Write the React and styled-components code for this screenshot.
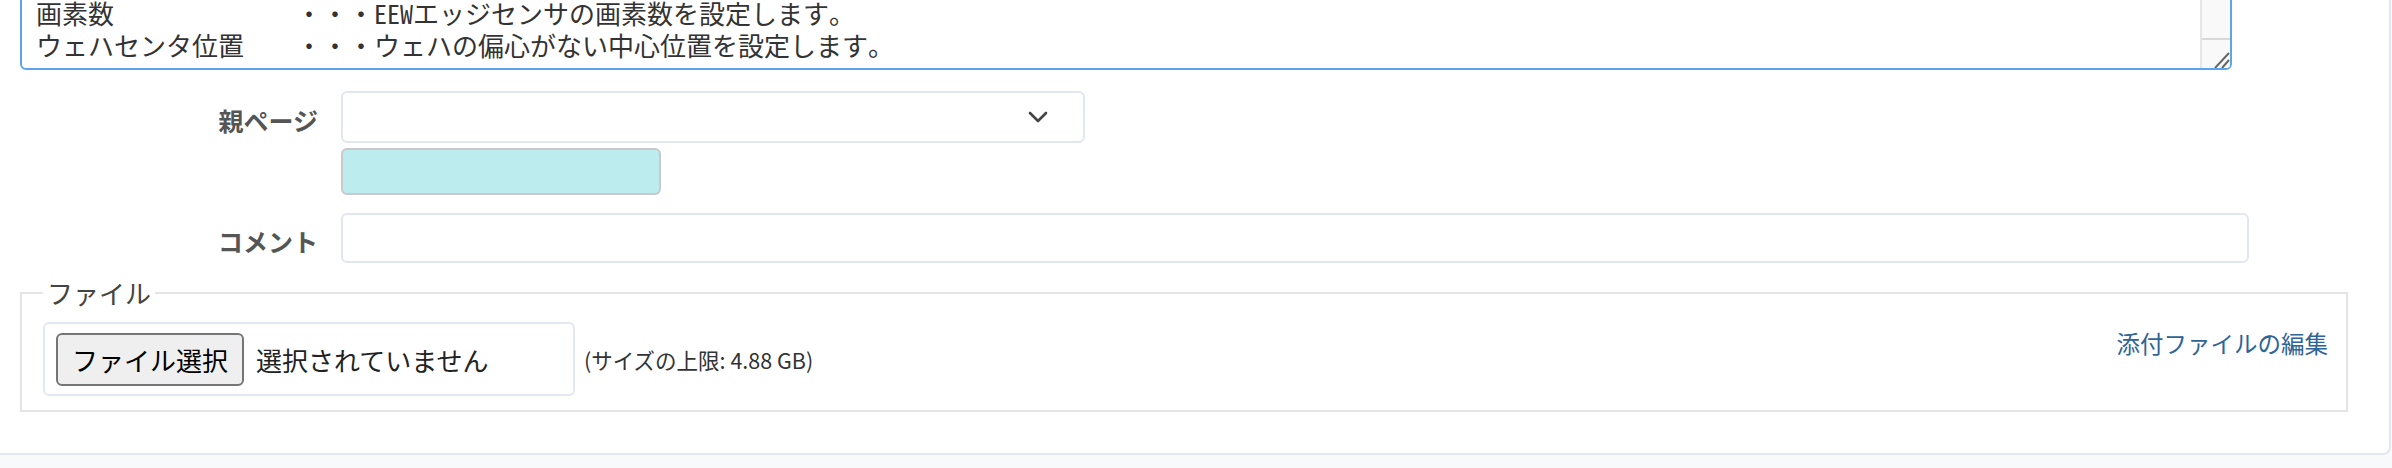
import React from "react";
import styled, { createGlobalStyle } from "styled-components";

const GlobalStyle = createGlobalStyle`
  html, body {
    margin: 0;
    padding: 0;
    background: #f8f9fb;
  }
  body {
    font-family: "Noto Sans CJK JP", "Liberation Sans", sans-serif;
    overflow: hidden;
  }
`;

export const Page = styled.div`
  width: 2391px;
  box-sizing: border-box;
  background: #fff;
  border-right: 2px solid #e3e7ee;
  border-bottom: 2px solid #e3e7ee;
  border-bottom-right-radius: 8px;
  padding: 0 0 41px 20px;
`;

// textarea with its scrollbar column; the top of it is scrolled out of view
export const EditorFrame = styled.div`
  box-sizing: border-box;
  display: flex;
  width: 2212px;
  height: 273px;
  margin-top: -203px;
  border: 2px solid #5aa5ee;
  border-radius: 6px;
  background: #fff;
  overflow: hidden;
`;

export const WikiText = styled.textarea`
  flex: 1;
  min-width: 0;
  box-sizing: border-box;
  margin: 0;
  padding: 6px 14px 7px 14px;
  border: none;
  outline: none;
  background: transparent;
  color: #333;
  font-family: "Noto Sans Mono CJK JP", "Noto Sans CJK JP", monospace;
  font-size: 26px;
  line-height: 32px;
  white-space: pre;
  overflow: hidden;
  resize: none;
`;

export const ScrollGutter = styled.div`
  width: 28px;
  display: flex;
  flex-direction: column;
  background: #f9f9f9;
  border-left: 2px solid #e6e6e6;
`;

export const ScrollTrack = styled.div`
  flex: 1;
`;

export const ScrollCorner = styled.div`
  height: 28px;
  border-top: 2px solid #d8d8d8;
  display: flex;
  align-items: flex-end;
  justify-content: flex-end;
`;

export const FormRow = styled.div`
  display: grid;
  grid-template-columns: 298px auto;
  column-gap: 23px;
  align-items: start;
  margin-top: ${(p) => p.$top}px;
`;

export const Label = styled.label`
  text-align: right;
  font-weight: bold;
  font-size: 25px;
  color: #555;
  line-height: ${(p) => p.$h}px;
  padding-top: 3px;
`;

export const Field = styled.div`
  display: flex;
  flex-direction: column;
  gap: 5px;
`;

export const Select = styled.div`
  box-sizing: border-box;
  width: 744px;
  height: 52px;
  border: 2px solid #e2e7ef;
  border-radius: 6px;
  background: #fff;
  display: flex;
  align-items: center;
  justify-content: flex-end;
  padding-right: 35px;
`;

export const Swatch = styled.div`
  box-sizing: border-box;
  width: 320px;
  height: 47px;
  background: #bdecee;
  border: 2px solid #c9c9c9;
  border-radius: 6px;
`;

export const TextInput = styled.input`
  box-sizing: border-box;
  width: 1908px;
  height: 50px;
  border: 2px solid #e2e7ef;
  border-radius: 6px;
  background: #fff;
  outline: none;
`;

export const Files = styled.fieldset`
  box-sizing: border-box;
  width: 2328px;
  min-width: 0;
  margin: 10px 0 0 0;
  padding: 12px 18px 14px 21px;
  border: 2px solid #e4e4e4;
`;

export const Legend = styled.legend`
  padding: 0 4px;
  font-size: 26px;
  line-height: 34px;
  color: #444;
`;

export const FileRow = styled.div`
  display: flex;
  align-items: center;
  justify-content: space-between;
`;

export const FileGroup = styled.div`
  display: flex;
  align-items: center;
  gap: 9px;
`;

export const FileBox = styled.div`
  box-sizing: border-box;
  width: 532px;
  height: 74px;
  border: 2px solid #e3e8f0;
  border-radius: 6px;
  padding: 0 11px;
  display: flex;
  align-items: center;
  gap: 12px;
`;

export const FileButton = styled.button`
  box-sizing: border-box;
  width: 188px;
  height: 53px;
  padding: 0;
  background: #efefef;
  border: 2px solid #767676;
  border-radius: 6px;
  font-family: inherit;
  font-size: 26px;
  color: #000;
`;

export const NoFile = styled.span`
  font-size: 26px;
  color: #222;
`;

export const SizeNote = styled.span`
  font-size: 21.5px;
  color: #333;
`;

export const EditLink = styled.a`
  align-self: flex-start;
  margin-top: 4px;
  font-size: 23.5px;
  line-height: 34px;
  color: #2e6496;
  text-decoration: none;
`;

const wikiBody = [
  "検査条件の設定項目について説明します。",
  "",
  "検査レシピ          ・・・検査に使用するレシピを選択します。",
  "ウェハサイズ        ・・・ウェハの直径を設定します。",
  "ノッチ方向          ・・・ノッチの向きを設定します。",
  "エッジ除外幅        ・・・検査対象外とする外周幅を設定します。",
  "画素数              ・・・EEWエッジセンサの画素数を設定します。",
  "ウェハセンタ位置    ・・・ウェハの偏心がない中心位置を設定します。",
].join("\n");

function Chevron() {
  return (
    <svg width="20" height="12" viewBox="0 0 20 12" fill="none">
      <polyline
        points="2,2 10,10 18,2"
        stroke="#444"
        strokeWidth="2.6"
        strokeLinecap="round"
        strokeLinejoin="round"
      />
    </svg>
  );
}

function ResizeGrip() {
  return (
    <svg width="26" height="26" viewBox="0 0 26 26" fill="none">
      <line x1="11" y1="26" x2="25" y2="11" stroke="#666" strokeWidth="2" />
      <line x1="18" y1="26" x2="25" y2="18" stroke="#666" strokeWidth="2" />
    </svg>
  );
}

export default function App() {
  return (
    <>
      <GlobalStyle />
      <Page>
        <EditorFrame>
          <WikiText defaultValue={wikiBody} spellCheck={false} />
          <ScrollGutter>
            <ScrollTrack />
            <ScrollCorner>
              <ResizeGrip />
            </ScrollCorner>
          </ScrollGutter>
        </EditorFrame>

        <FormRow $top={21}>
          <Label $h={52}>親ページ</Label>
          <Field>
            <Select>
              <Chevron />
            </Select>
            <Swatch />
          </Field>
        </FormRow>

        <FormRow $top={18}>
          <Label $h={50}>コメント</Label>
          <TextInput type="text" />
        </FormRow>

        <Files>
          <Legend>ファイル</Legend>
          <FileRow>
            <FileGroup>
              <FileBox>
                <FileButton type="button">ファイル選択</FileButton>
                <NoFile>選択されていません</NoFile>
              </FileBox>
              <SizeNote>(サイズの上限: 4.88 GB)</SizeNote>
            </FileGroup>
            <EditLink href="#">添付ファイルの編集</EditLink>
          </FileRow>
        </Files>
      </Page>
    </>
  );
}
